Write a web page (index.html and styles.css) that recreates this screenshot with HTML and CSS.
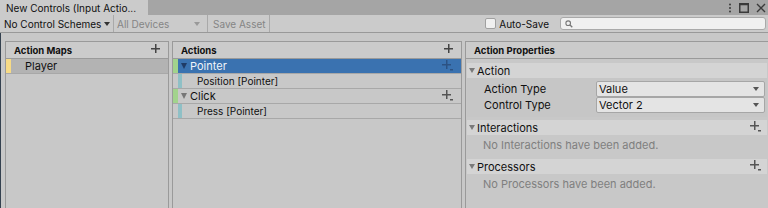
FILE: index.html
```html
<!DOCTYPE html>
<html>
<head>
<meta charset="utf-8">
<link rel="stylesheet" href="styles.css">
</head>
<body>
<div class="win">
  <div class="tabbar">
    <div class="tab">New Controls (Input Actio...</div>
    <div class="winctl">
      <svg width="4" height="10" viewBox="0 0 4 10"><circle cx="2" cy="1.5" r="1" fill="#3a3a3a"/><circle cx="2" cy="5" r="1" fill="#3a3a3a"/><circle cx="2" cy="8.5" r="1" fill="#3a3a3a"/></svg>
      <svg width="10" height="10" viewBox="0 0 10 10"><rect x="0.75" y="0.75" width="8.5" height="8.5" fill="none" stroke="#3a3a3a" stroke-width="1.5"/><rect x="0.75" y="0.75" width="8.5" height="1.5" fill="#3a3a3a"/></svg>
      <svg width="10" height="10" viewBox="0 0 10 10"><path d="M1 1 L9 9 M9 1 L1 9" stroke="#3a3a3a" stroke-width="1.4"/></svg>
    </div>
  </div>
  <div class="toolbar">
    <div class="tb-item schemes">No Control Schemes<span class="tri dark"></span></div>
    <div class="tb-item devices disabled">All Devices<span class="tri light"></span></div>
    <div class="tb-item disabled save">Save Asset</div>
    <div class="spacer"></div>
    <div class="autosave"><span class="cb"></span>Auto-Save</div>
    <div class="search">
      <svg width="8" height="8" viewBox="0 0 8 8"><circle cx="3.2" cy="3.2" r="2.3" fill="none" stroke="#777" stroke-width="1.1"/><path d="M5 5 L7.3 7.3" stroke="#777" stroke-width="1.3"/></svg>
    </div>
  </div>
  <div class="main">
    <div class="panel maps">
      <div class="phead"><span>Action Maps</span><span class="plus"></span></div>
      <div class="row player"><span class="bar yellow"></span><span class="lbl">Player</span></div>
    </div>
    <div class="panel actions">
      <div class="phead"><span>Actions</span><span class="plus"></span></div>
      <div class="row act sel"><span class="bar green"></span><span class="fold navy"></span><span class="lbl">Pointer</span><span class="plusmore"></span></div>
      <div class="row bind"><span class="bar teal"></span><span class="lbl">Position [Pointer]</span></div>
      <div class="row act"><span class="bar green"></span><span class="fold"></span><span class="lbl">Click</span><span class="plusmore"></span></div>
      <div class="row bind"><span class="bar teal"></span><span class="lbl">Press [Pointer]</span></div>
    </div>
    <div class="panel props">
      <div class="phead"><span>Action Properties</span></div>
      <div class="pbody">
        <div class="sect first"><span class="fold"></span><span class="lbl">Action</span></div>
        <div class="fields">
          <div class="field"><span class="flbl">Action Type</span><div class="dd">Value<span class="tri dark"></span></div></div>
          <div class="field"><span class="flbl">Control Type</span><div class="dd">Vector 2<span class="tri dark"></span></div></div>
        </div>
        <div class="sect"><span class="fold"></span><span class="lbl">Interactions</span><span class="plusmore"></span></div>
        <div class="empty">No Interactions have been added.</div>
        <div class="sect"><span class="fold"></span><span class="lbl">Processors</span><span class="plusmore"></span></div>
        <div class="empty">No Processors have been added.</div>
      </div>
    </div>
  </div>
</div>
</body>
</html>
```
FILE: styles.css
```css
* { box-sizing: border-box; }
html, body { margin: 0; padding: 0; }
body {
  width: 768px;
  height: 208px;
  overflow: hidden;
  background: #c8c8c8;
  font-family: Inter, "Noto Sans", sans-serif;
  font-size: 10px;
  color: #101010;
}
.win { display: flex; flex-direction: column; height: 208px; }

.tabbar {
  height: 15px;
  background: #a5a5a5;
  display: flex;
  align-items: stretch;
}
.tab {
  width: 148px;
  background: #cbcbcb;
  padding: 1px 0 0 6px;
  line-height: 14px;
  white-space: nowrap;
}
.winctl {
  margin-left: auto;
  display: flex;
  align-items: center;
  gap: 7px;
  padding-right: 2px;
}

.toolbar {
  height: 18px;
  background: #cbcbcb;
  border-bottom: 1px solid #999;
  display: flex;
  align-items: stretch;
}
.tb-item {
  display: flex;
  align-items: center;
  border-right: 1px solid #a9a9a9;
  white-space: nowrap;
}
.schemes { width: 114px; padding-left: 4px; }
.devices { width: 94px; padding-left: 3px; }
.save { width: 62px; padding-left: 5px; }
.disabled { color: #858585; }
.tri {
  display: inline-block;
  width: 0; height: 0;
  border-left: 3.5px solid transparent;
  border-right: 3.5px solid transparent;
  border-top: 4px solid #333;
}
.schemes .tri { margin-left: 3px; }
.devices .tri { margin-left: auto; margin-right: 7px; border-top-color: #999; }
.spacer { flex: 1; }
.autosave {
  display: flex;
  align-items: center;
  padding-right: 11px;
}
.cb {
  width: 11px; height: 11px;
  background: #f0f0f0;
  border: 1px solid #a0a0a0;
  border-radius: 2px;
  margin-right: 3px;
}
.search {
  width: 206px;
  height: 13px;
  margin: 2px 2px 0 0;
  background: #f0f0f0;
  border: 1px solid #a9a9a9;
  border-radius: 3px;
  display: flex;
  align-items: center;
  padding-left: 4px;
}

.main {
  flex: 1;
  display: flex;
  gap: 3px;
  padding: 8px 0 0 4px;
  border-left: 1px solid #34414f;
}
.panel {
  border: 1px solid #9a9a9a;
  border-bottom: none;
  display: flex;
  flex-direction: column;
}
.maps { width: 164px; }
.actions { width: 290px; }
.props { flex: 1; border-right: none; }
.phead {
  height: 17px;
  border-bottom: 1px solid #9a9a9a;
  display: flex;
  align-items: center;
  padding: 0 8px 0 8px;
  font-weight: 700;
  font-size: 9.5px;
  background: #cbcbcb;
}
.plus {
  margin-left: auto;
  width: 9px; height: 9px;
  margin-top: -3px;
  background:
    linear-gradient(#444, #444) center / 9px 1.5px no-repeat,
    linear-gradient(#444, #444) center / 1.5px 9px no-repeat;
}
.row {
  height: 15px;
  display: flex;
  align-items: center;
  white-space: nowrap;
}
.bar { width: 5px; height: 100%; }
.yellow { background: #f7db86; }
.green { background: #a2d38c; }
.teal { background: #8fc0c6; }
.player { background: #b3b3b3; border-bottom: 1px solid #a8a8a8; }
.player .lbl { margin-left: 14px; font-size: 11px; }
.act { border-bottom: 1px solid #a8a8a8; padding-right: 8px; }
.bind { border-bottom: 1px solid #a8a8a8; height: 15px; }
.bind .bar { margin-left: 5px; width: 4px; }
.bind .lbl { margin-left: 15px; }
.act .lbl { margin-left: 3px; font-size: 11px; }
.sel { background: #3a72b0; color: #f0f4fa; }
.fold {
  width: 0; height: 0;
  border-left: 3.5px solid transparent;
  border-right: 3.5px solid transparent;
  border-top: 6px solid #777;
  margin-left: 3px;
}
.fold.navy { border-top-color: #1f3b66; }
.plusmore {
  margin-left: auto;
  width: 11px; height: 11px;
  margin-top: -2px;
  background:
    linear-gradient(#555, #555) 0 4px / 9px 1.5px no-repeat,
    linear-gradient(#555, #555) 3.75px 0 / 1.5px 9px no-repeat,
    linear-gradient(#555, #555) 8px 9px / 3px 1.5px no-repeat;
}
.sel .plusmore {
  background:
    linear-gradient(#2c5283, #2c5283) 0 4px / 9px 1.5px no-repeat,
    linear-gradient(#2c5283, #2c5283) 3.75px 0 / 1.5px 9px no-repeat,
    linear-gradient(#2c5283, #2c5283) 8px 9px / 3px 1.5px no-repeat;
}

.pbody { padding: 3px 1px 0 1px; display: flex; flex-direction: column; }
.sect {
  height: 15px;
  background: #d4d4d4;
  display: flex;
  align-items: center;
  padding-right: 6px;
  font-size: 11px;
  margin-top: 3px;
}
.sect.first { margin-top: 1px; }
.sect .fold { border-top-color: #7a7a7a; border-top-width: 5.5px; margin-left: 2px; }
.sect .lbl { margin-left: 2px; }
.fields { padding: 3px 2px 5px 17px; background: #c6c6c6; display: flex; flex-direction: column; gap: 1px; }
.field { display: flex; align-items: center; height: 15px; }
.flbl { width: 112px; font-size: 11px; }
.dd {
  flex: 1;
  height: 16px;
  background: #e4e4e4;
  border: 1px solid #a6a6a6;
  border-radius: 2px;
  display: flex;
  align-items: center;
  padding: 0 5px 0 2px;
  font-size: 11px;
}
.dd .tri { margin-left: auto; border-top-color: #555; }
.empty {
  height: 21px;
  padding: 3px 0 0 16px;
  color: #7f7f7f;
  font-size: 11px;
}
```
